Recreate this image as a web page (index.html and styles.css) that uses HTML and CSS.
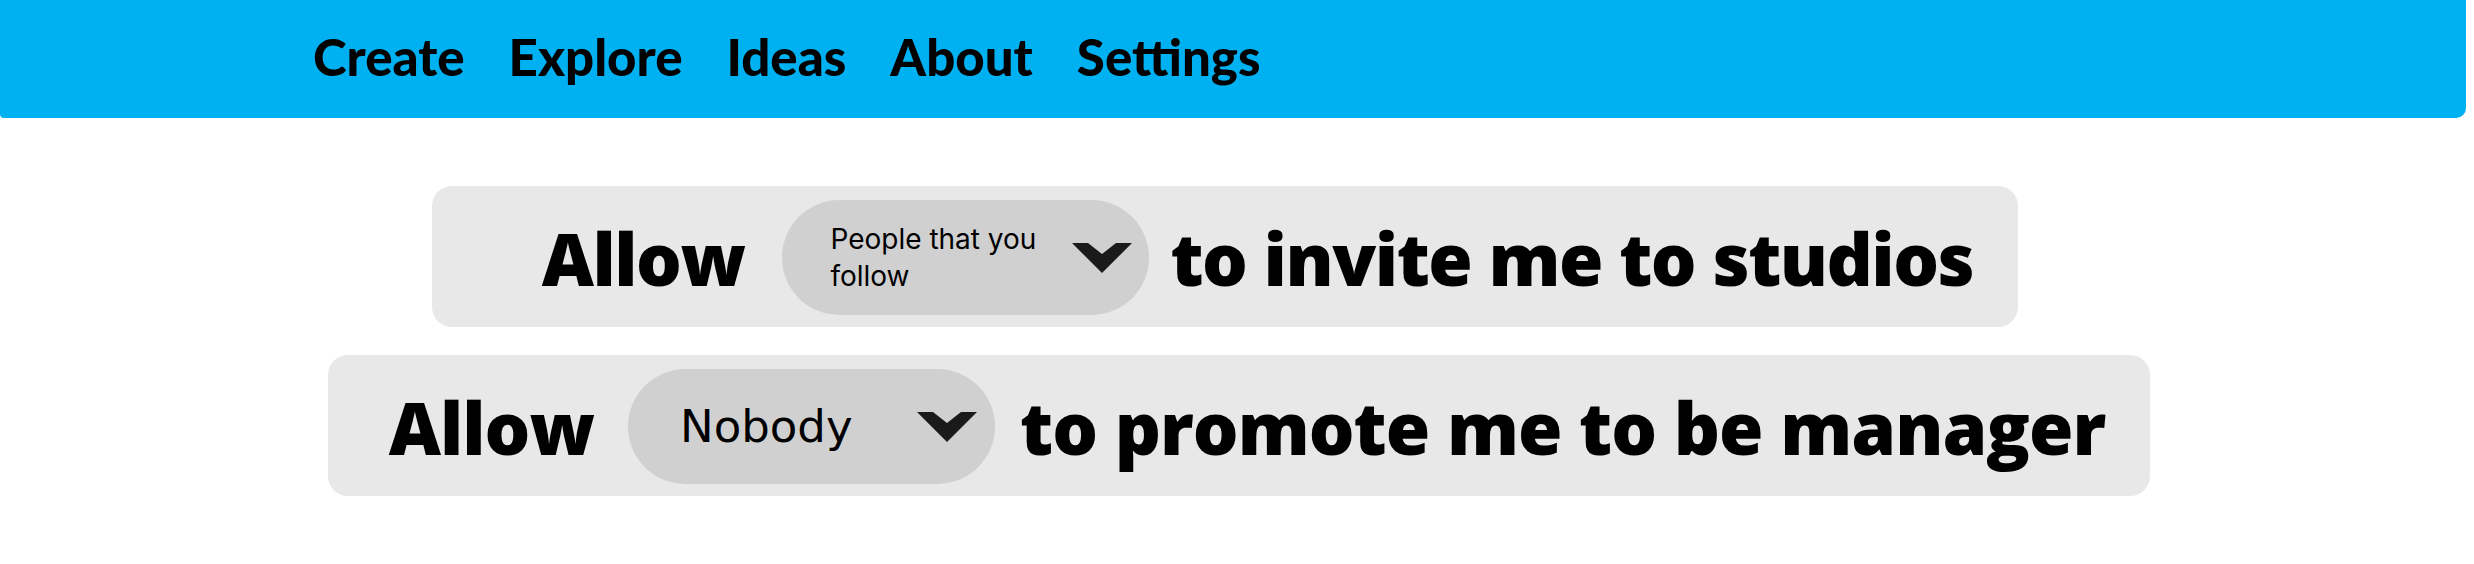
FILE: index.html
```html
<!DOCTYPE html>
<html lang="en">
<head>
    <meta charset="UTF-8">
    <meta name="viewport" content="width=device-width, initial-scale=1.0">
    <title>Settings</title>
    <link rel="stylesheet" href="styles.css">
</head>
<body>
    <nav class="topbar">
        <a href="#">Create</a>
        <a href="#">Explore</a>
        <a href="#">Ideas</a>
        <a href="#">About</a>
        <a href="#">Settings</a>
    </nav>

    <main class="settings">
        <div class="setting-row first">
            <span class="label">Allow</span>
            <div class="dropdown">
                <span class="dropdown-text small">People that you follow</span>
                <svg class="chevron" width="60" height="30" viewBox="0 0 60 30"><polygon points="0,0 16,0 30,11 44,0 60,0 30,30"/></svg>
            </div>
            <span class="label">to invite me to studios</span>
        </div>

        <div class="setting-row second">
            <span class="label">Allow</span>
            <div class="dropdown">
                <span class="dropdown-text">Nobody</span>
                <svg class="chevron" width="60" height="30" viewBox="0 0 60 30"><polygon points="0,0 16,0 30,11 44,0 60,0 30,30"/></svg>
            </div>
            <span class="label">to promote me to be manager</span>
        </div>
    </main>
</body>
</html>
```

FILE: styles.css
```css
body {
    margin: 0;
    font-family: "Open Sans", sans-serif;
    background-color: #ffffff;
    color: #000000;
}
.topbar {
    display: flex;
    align-items: center;
    gap: 44px;
    width: calc(100% - 8px);
    height: 118px;
    padding: 0 0 6px 313px;
    box-sizing: border-box;
    background-color: #00b1f2;
    border-radius: 0 0 10px 4px;
}
.topbar a {
    color: #000000;
    text-decoration: none;
    font-family: Lato, sans-serif;
    font-size: 51px;
    font-weight: 900;
}
.settings {
    display: flex;
    flex-direction: column;
    align-items: center;
    gap: 28px;
    margin: 68px 8px 0;
}
.setting-row {
    display: flex;
    align-items: center;
    height: 141px;
    padding: 2px 45px 0 110px;
    box-sizing: border-box;
    background-color: #e8e8e8;
    border-radius: 20px;
}
.setting-row.first {
    margin-right: 24px;
}
.setting-row.second {
    padding-left: 61px;
    margin-left: 4px;
}
.label {
    font-size: 72px;
    font-weight: 800;
    letter-spacing: -1px;
    white-space: nowrap;
}
.first .label {
    letter-spacing: -1.5px;
}
.dropdown {
    display: flex;
    align-items: center;
    justify-content: space-between;
    width: 367px;
    height: 115px;
    margin: 0 21px 0 38px;
    padding: 0 17px 0 48px;
    box-sizing: border-box;
    background-color: #d0d0d0;
    border-radius: 58px;
}
.second .dropdown {
    margin: 0 25px 0 34px;
    padding: 0 18px 0 52px;
}
.dropdown-text {
    font-family: "DejaVu Sans", sans-serif;
    font-size: 45px;
}
.dropdown-text.small {
    width: 235px;
    font-family: Inter, sans-serif;
    font-size: 28px;
    line-height: 37px;
}
.chevron {
    flex-shrink: 0;
    fill: #1a1a1a;
}
```
